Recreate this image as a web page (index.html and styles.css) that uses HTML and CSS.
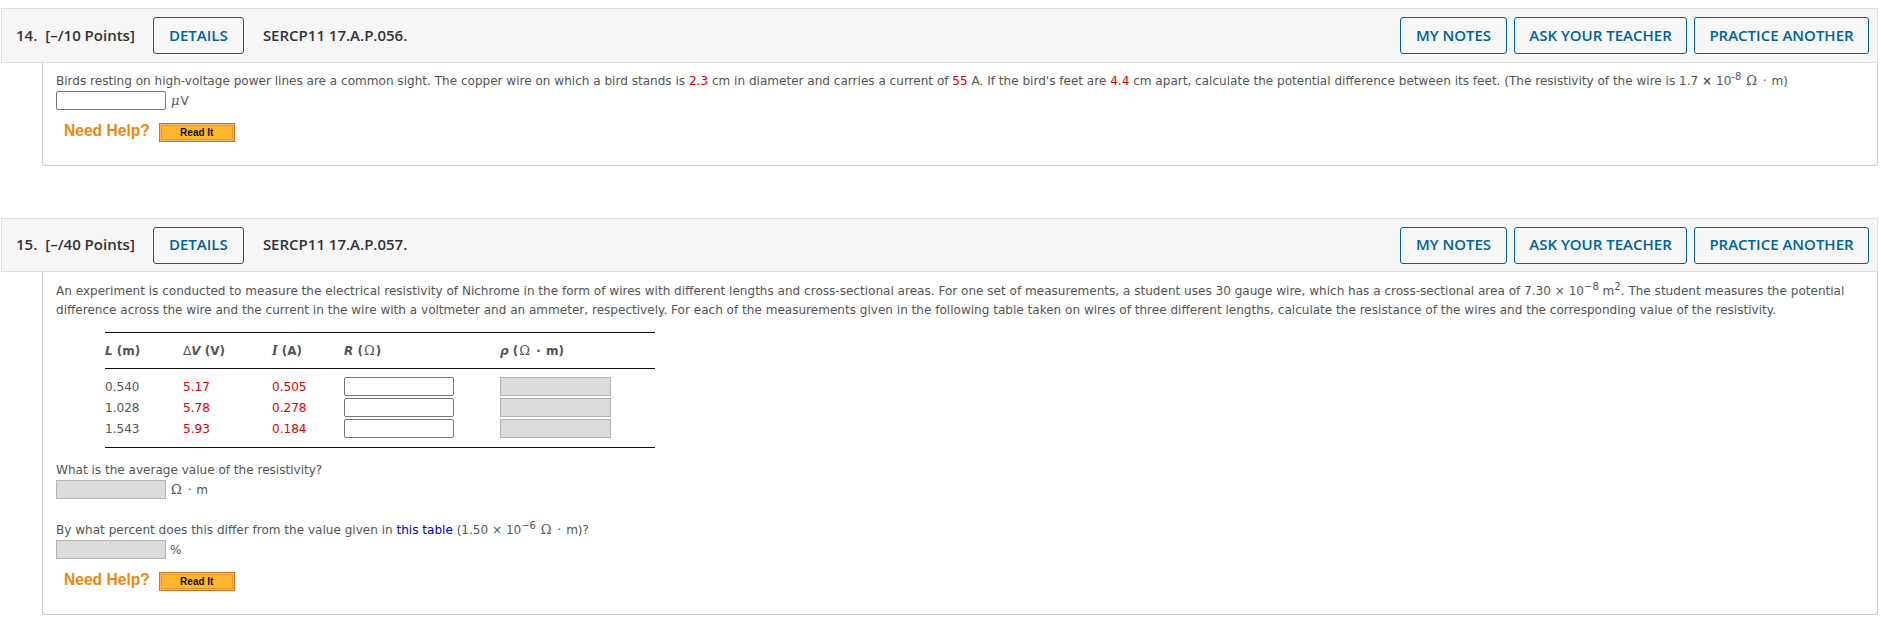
FILE: index.html
```html
<!DOCTYPE html>
<html lang="en">
<head>
    <meta charset="UTF-8">
    <title>Assignment</title>
    <link rel="stylesheet" href="styles.css">
</head>
<body>
    <section class="question question-first">
        <header class="q-header">
            <span class="q-num">14.</span>
            <span class="q-points">[–/10 Points]</span>
            <a class="q-btn q-details">DETAILS</a>
            <span class="q-code">SERCP11 17.A.P.056.</span>
            <div class="q-actions">
                <a class="q-btn btn-notes">MY NOTES</a>
                <a class="q-btn btn-ask">ASK YOUR TEACHER</a>
                <a class="q-btn btn-practice">PRACTICE ANOTHER</a>
            </div>
        </header>
        <div class="q-body">
            <p class="line">Birds resting on high-voltage power lines are a common sight. The copper wire on which a bird stands is <span class="red">2.3</span> cm in diameter and carries a current of <span class="red">55</span> A. If the bird's feet are <span class="red">4.4</span> cm apart, calculate the potential difference between its feet. (The resistivity of the wire is 1.7 <b>×</b> 10<sup>-8</sup> <span class="math">Ω</span> <span class="dot">·</span> m)</p>
            <div class="answer">
                <input class="box" type="text">
                <span class="unit"><i class="math">μ</i>V</span>
            </div>
            <div class="help">
                <span class="help-label">Need Help?</span>
                <span class="read-it">Read It</span>
            </div>
        </div>
    </section>

    <section class="question question-second">
        <header class="q-header">
            <span class="q-num">15.</span>
            <span class="q-points">[–/40 Points]</span>
            <a class="q-btn q-details">DETAILS</a>
            <span class="q-code">SERCP11 17.A.P.057.</span>
            <div class="q-actions">
                <a class="q-btn btn-notes">MY NOTES</a>
                <a class="q-btn btn-ask">ASK YOUR TEACHER</a>
                <a class="q-btn btn-practice">PRACTICE ANOTHER</a>
            </div>
        </header>
        <div class="q-body q-body-long">
            <p class="line">An experiment is conducted to measure the electrical resistivity of Nichrome in the form of wires with different lengths and cross-sectional areas. For one set of measurements, a student uses 30 gauge wire, which has a cross-sectional area of 7.30 × 10<sup>−8</sup> m<sup>2</sup>. The student measures the potential difference across the wire and the current in the wire with a voltmeter and an ammeter, respectively. For each of the measurements given in the following table taken on wires of three different lengths, calculate the resistance of the wires and the corresponding value of the resistivity.</p>

            <table class="data">
                <thead>
                    <tr>
                        <th class="col-l"><i>L</i> (m)</th>
                        <th class="col-v"><span class="delta">Δ</span><i>V</i> (V)</th>
                        <th class="col-i"><i class="serif">I</i> (A)</th>
                        <th class="col-r"><i>R</i> (<span class="math">Ω</span>)</th>
                        <th class="col-p"><i>ρ</i> (<span class="math">Ω</span> <span class="dot">·</span> m)</th>
                    </tr>
                </thead>
                <tbody>
                    <tr>
                        <td>0.540</td>
                        <td class="red">5.17</td>
                        <td class="red">0.505</td>
                        <td><input class="box" type="text"></td>
                        <td><input class="box box-off" type="text" disabled></td>
                    </tr>
                    <tr>
                        <td>1.028</td>
                        <td class="red">5.78</td>
                        <td class="red">0.278</td>
                        <td><input class="box" type="text"></td>
                        <td><input class="box box-off" type="text" disabled></td>
                    </tr>
                    <tr>
                        <td>1.543</td>
                        <td class="red">5.93</td>
                        <td class="red">0.184</td>
                        <td><input class="box" type="text"></td>
                        <td><input class="box box-off" type="text" disabled></td>
                    </tr>
                </tbody>
            </table>

            <p class="line line-after-table">What is the average value of the resistivity?</p>
            <div class="answer">
                <input class="box box-off" type="text" disabled>
                <span class="unit"><span class="math">Ω</span> <span class="dot">·</span> m</span>
            </div>

            <p class="line line-gap">By what percent does this differ from the value given in <a class="link">this table</a> (1.50 × 10<sup>−6</sup> <span class="math">Ω</span> <span class="dot">·</span> m)?</p>
            <div class="answer">
                <input class="box box-off" type="text" disabled>
                <span class="unit">%</span>
            </div>
            <div class="help">
                <span class="help-label">Need Help?</span>
                <span class="read-it">Read It</span>
            </div>
        </div>
    </section>
</body>
</html>
```

FILE: styles.css
```css
body {
    margin: 0;
    padding: 8px 3px 0 1px;
    background-color: #fff;
    color: #555;
    font-family: "DejaVu Sans", sans-serif;
    font-size: 12.05px;
}

.question {
    margin-top: 52px;
}

.question-first {
    margin-top: 0;
}

.q-header {
    display: flex;
    align-items: center;
    height: 55px;
    box-sizing: border-box;
    padding: 0 8px 0 14px;
    background-color: #f6f6f6;
    border: 1px solid #e0e0e0;
    font-family: "Open Sans", sans-serif;
    font-size: 15px;
    font-weight: 600;
    color: #333;
}

.question-second .q-header {
    height: 54px;
}

.question-second .q-btn {
    padding-bottom: 2px;
}

.q-num,
.q-points,
.q-code {
    margin-bottom: 2px;
}

.q-num {
    margin-right: 8px;
}

.q-details {
    margin-left: 18px;
}

.q-code {
    margin-left: 19px;
}

.q-actions {
    display: flex;
    gap: 7px;
    margin-left: auto;
}

.q-btn {
    display: flex;
    align-items: center;
    justify-content: center;
    height: 37px;
    box-sizing: border-box;
    padding-bottom: 1px;
    border: 1px solid #00639a;
    border-radius: 3px;
    color: #00639a;
    font-weight: 600;
}

.q-details { width: 91px; }
.btn-notes { width: 107px; }
.btn-ask { width: 173px; }
.btn-practice { width: 175px; }

.q-body {
    margin-left: 41px;
    padding: 9px 0 23px 13px;
    border: 1px solid #ccc;
    border-top: none;
    border-radius: 0 0 3px 3px;
}

.q-body-long {
    padding-top: 10px;
}

.line {
    margin: 0;
    line-height: 19px;
}

.line-after-table {
    margin-top: 13px;
}

.line-gap {
    margin-top: 22px;
}

sup {
    font-size: 10px;
    line-height: 0;
}

.math {
    margin: 0 1px;
    font-family: "DejaVu Serif", serif;
    font-size: 13px;
    font-weight: normal;
    line-height: 0;
}

.dot {
    margin: 0 1px;
}

.red {
    color: #e00000;
}

.link {
    color: #0000c8;
}

.answer {
    display: flex;
    align-items: center;
    height: 19px;
}

.box {
    display: block;
    width: 110px;
    height: 19px;
    box-sizing: border-box;
    margin: 0;
    padding: 0;
    background-color: #fff;
    border: 1px solid #767676;
    border-radius: 2px;
}

.box-off {
    background-color: #dbdbdb;
    border-color: #b4b4b4;
    border-radius: 0;
}

.data .box-off {
    width: 111px;
}

.unit {
    margin-left: 4px;
}

.help {
    display: flex;
    align-items: center;
    gap: 9px;
    margin: 12px 0 0 8px;
}

.help-label {
    margin-bottom: 2px;
    color: #ef8611;
    font-family: "Liberation Sans", sans-serif;
    font-size: 15.6px;
    font-weight: bold;
}

.read-it {
    display: flex;
    align-items: center;
    justify-content: center;
    width: 76px;
    height: 19px;
    box-sizing: border-box;
    background-color: #feb62e;
    border: 1px solid #c8761f;
    box-shadow: inset 0 0 0 1px #f6b873, inset 0 0 0 2px #ea962f;
    color: #111;
    font-family: "Liberation Sans", sans-serif;
    font-size: 10px;
    font-weight: bold;
}

.data {
    width: 550px;
    margin: 12px 0 0 49px;
    border-collapse: collapse;
    table-layout: fixed;
    border-top: 1px solid #111;
    border-bottom: 1px solid #111;
}

.data th {
    height: 35px;
    padding: 0;
    border-bottom: 1px solid #111;
    text-align: left;
    font-size: 12px;
    color: #555;
}

.data td {
    height: 21px;
    padding: 0;
}

.data tbody tr:first-child td {
    padding-top: 7px;
}

.data tbody tr:last-child td {
    padding-bottom: 8px;
}

.delta {
    font-weight: normal;
}

.serif {
    font-family: "DejaVu Serif", serif;
}

.col-l { width: 78px; }
.col-v { width: 89px; }
.col-i { width: 72px; }
.col-r { width: 156px; }
```
